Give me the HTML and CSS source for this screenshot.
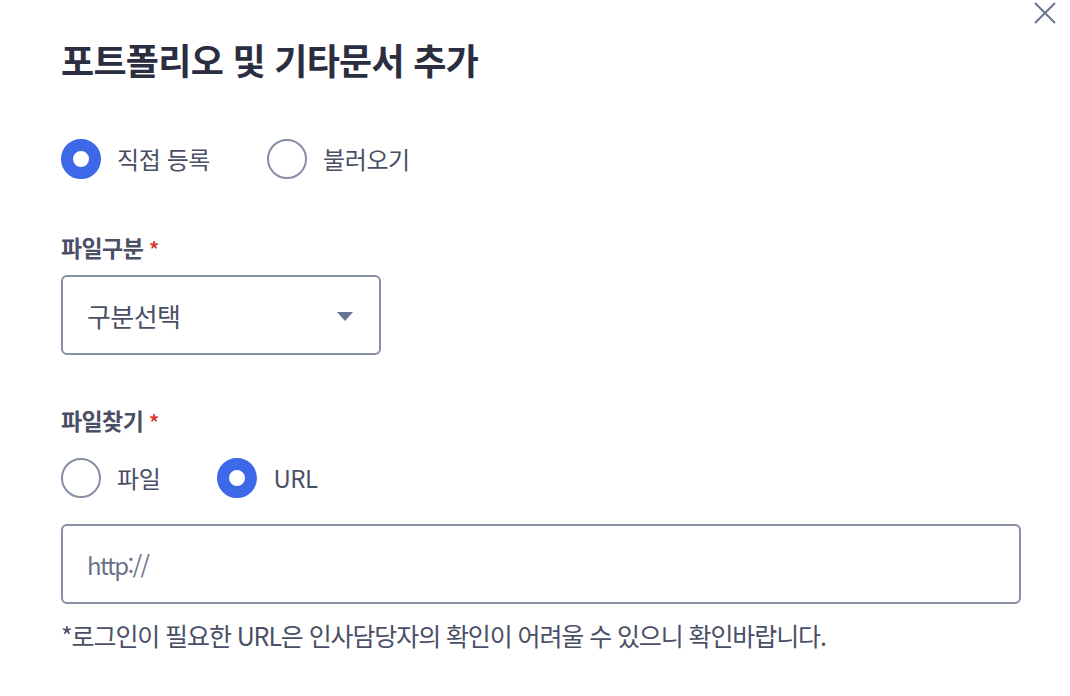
FILE: index.html
```html
<!DOCTYPE html>
<html lang="ko">
<head>
<meta charset="utf-8">
<link rel="stylesheet" href="styles.css">
</head>
<body>
<div class="modal">
  <button class="close" aria-label="닫기">
    <svg width="22" height="22" viewBox="0 0 22 22"><path d="M1 1L21 21M21 1L1 21" stroke="#6b7591" stroke-width="2" fill="none"/></svg>
  </button>
  <h1 class="title">포트폴리오 및 기타문서 추가</h1>
  <div class="radio-group top-radios">
    <label class="radio"><span class="dot on"></span><span class="rlabel">직접 등록</span></label>
    <label class="radio"><span class="dot"></span><span class="rlabel">불러오기</span></label>
  </div>
  <div class="field">
    <div class="flabel">파일구분 <span class="req">*</span></div>
    <div class="select"><span>구분선택</span><span class="caret"></span></div>
  </div>
  <div class="field second">
    <div class="flabel">파일찾기 <span class="req">*</span></div>
    <div class="radio-group file-radios">
      <label class="radio"><span class="dot"></span><span class="rlabel">파일</span></label>
      <label class="radio"><span class="dot on"></span><span class="rlabel">URL</span></label>
    </div>
    <div class="input"><span class="ph">http://</span></div>
    <p class="note">*로그인이 필요한 URL은 인사담당자의 확인이 어려울 수 있으니 확인바랍니다.</p>
  </div>
</div>
</body>
</html>
```
FILE: styles.css
```css
* { box-sizing: border-box; }
html, body { margin: 0; padding: 0; background: #fff; }
body {
  font-family: "Noto Sans CJK KR", "Noto Sans", sans-serif;
  color: #4a4f66;
  width: 1070px;
  height: 696px;
  overflow: hidden;
}
.modal {
  position: relative;
  padding: 30px 49px 0 61px;
}
.close {
  position: absolute;
  top: 2px;
  right: 14px;
  width: 22px;
  height: 22px;
  padding: 0;
  border: 0;
  background: none;
}
.close svg { display: block; }
.title {
  margin: 0;
  font-size: 36px;
  font-weight: 700;
  line-height: 58px;
  color: #2b2e40;
  letter-spacing: -0.7px;
}
.radio-group {
  display: flex;
  align-items: center;
}
.top-radios { margin-top: 51px; gap: 57px; }
.radio {
  display: flex;
  align-items: center;
  gap: 16px;
}
.dot {
  width: 40px;
  height: 40px;
  border-radius: 50%;
  border: 2px solid #868fa3;
  background: #fff;
  flex: none;
}
.dot.on {
  border: 12px solid #3d68e8;
}
.rlabel {
  font-size: 24px;
  line-height: 40px;
  color: #4a4f66;
  letter-spacing: -0.4px;
}
.field { margin-top: 50px; }
.field.second { margin-top: 47px; }
.flabel {
  font-size: 23px;
  font-weight: 700;
  line-height: 36px;
  color: #4a4f66;
  letter-spacing: -0.6px;
}
.req { color: #d63a35; font-size: 20px; }
.select {
  margin-top: 8px;
  width: 320px;
  height: 80px;
  border: 2px solid #868fa3;
  border-radius: 6px;
  display: flex;
  align-items: center;
  justify-content: space-between;
  padding: 0 26px 0 24px;
  font-size: 26px;
  color: #4a4f66;
  letter-spacing: -0.6px;
}
.caret {
  width: 0;
  height: 0;
  border-left: 8px solid transparent;
  border-right: 8px solid transparent;
  border-top: 9px solid #6b7591;
  margin-top: 2px;
}
.file-radios { margin-top: 18px; gap: 57px; }
.input {
  margin-top: 26px;
  width: 960px;
  height: 80px;
  border: 2px solid #868fa3;
  border-radius: 6px;
  display: flex;
  align-items: center;
  padding: 0 24px;
}
.ph {
  font-size: 24px;
  color: #6b7189;
  letter-spacing: -1.6px;
}
.note {
  margin: 14px 0 0;
  font-size: 25px;
  line-height: 34px;
  color: #4a4f66;
  letter-spacing: -1.1px;
}
```
